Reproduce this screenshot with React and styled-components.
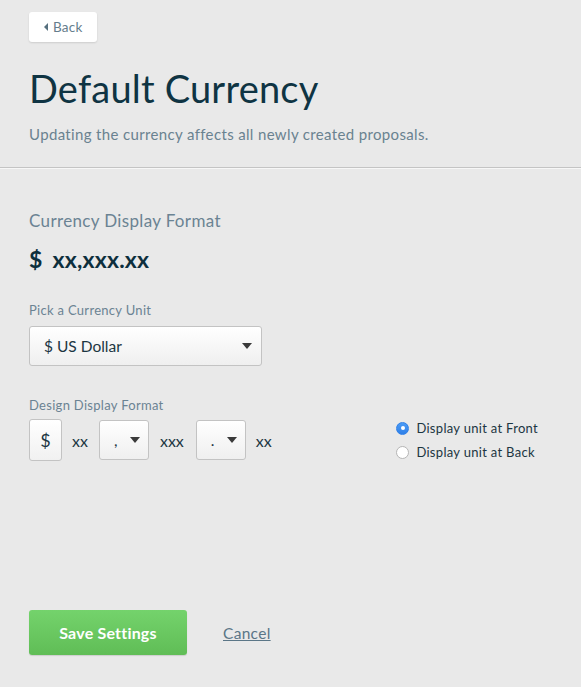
import React from "react";
import styled, { createGlobalStyle } from "styled-components";

const Global = createGlobalStyle`
  html, body { margin: 0; padding: 0; background: #e9e9e9; }
  body { font-family: "Lato", "Open Sans", sans-serif; -webkit-font-smoothing: antialiased; }
  * { box-sizing: border-box; }
`;

const Page = styled.div`
  width: 581px;
  min-height: 687px;
  background: #e9e9e9;
  display: flex;
  flex-direction: column;
`;

const Header = styled.header`
  padding: 12px 29px 0;
  border-bottom: 1px solid #c4c4c4;
  box-shadow: 0 1px 0 #f7f7f7;
  height: 168px;
`;

const BackButton = styled.button`
  display: inline-flex;
  align-items: center;
  gap: 5px;
  height: 30px;
  width: 68px;
  padding: 0 0 0 15px;
  border: none;
  border-radius: 3px;
  background: #fff;
  box-shadow: 0 1px 2px rgba(0,0,0,0.12);
  color: #657d8c;
  font-family: inherit;
  font-size: 13.5px;
  letter-spacing: 0.2px;
  cursor: pointer;
`;

const Caret = styled.span`
  width: 0;
  height: 0;
  border-top: 4px solid transparent;
  border-bottom: 4px solid transparent;
  border-right: 4px solid #56707f;
`;

const Title = styled.h1`
  margin: 24px 0 0;
  font-size: 38px;
  line-height: 44px;
  font-weight: 400;
  color: #0f3443;
  letter-spacing: 0.2px;
`;

const Subtitle = styled.p`
  margin: 14px 0 0;
  font-size: 15px;
  line-height: 20px;
  letter-spacing: 0.35px;
  color: #6a8290;
`;

const Body = styled.main`
  padding: 42px 29px 0;
  display: flex;
  flex-direction: column;
  flex: 1;
`;

const SectionTitle = styled.h2`
  margin: 0;
  font-size: 17px;
  line-height: 22px;
  font-weight: 400;
  letter-spacing: 0.35px;
  color: #6b8393;
`;

const Preview = styled.div`
  margin-top: 13px;
  display: flex;
  gap: 10px;
  font-size: 23px;
  line-height: 28px;
  font-weight: 700;
  letter-spacing: 0.2px;
  color: #0d2f3d;
`;

const Label = styled.label`
  display: block;
  margin-top: ${(p) => p.$top}px;
  font-size: 13px;
  line-height: 16px;
  letter-spacing: 0.3px;
  color: #6b8393;
`;

const SelectBox = styled.div`
  display: flex;
  align-items: center;
  justify-content: space-between;
  width: ${(p) => p.$w}px;
  height: ${(p) => p.$h}px;
  padding: 0 ${(p) => p.$pr}px 0 ${(p) => p.$pl}px;
  margin-top: ${(p) => p.$top || 0}px;
  border: 1px solid #c3c3c3;
  border-radius: 3px;
  background: linear-gradient(#ffffff, #efefef);
  color: #1c3642;
  font-size: 15.5px;
`;

const Arrow = styled.span`
  width: 0;
  height: 0;
  border-left: 5px solid transparent;
  border-right: 5px solid transparent;
  border-top: 6px solid #3a3a3a;
`;

const FormatRow = styled.div`
  display: flex;
  align-items: center;
  margin-top: 6px;
`;

const UnitBox = styled.div`
  width: 33px;
  height: 42px;
  display: flex;
  align-items: center;
  justify-content: center;
  border: 1px solid #c3c3c3;
  border-radius: 3px;
  background: linear-gradient(#ffffff, #f1f1f1);
  color: #1c3642;
  font-size: 18px;
`;

const Part = styled.span`
  font-size: 16px;
  color: #1c3642;
  margin: 0 ${(p) => p.$mr}px 0 ${(p) => p.$ml}px;
`;

const Radios = styled.div`
  margin-left: auto;
  margin-right: 14px;
  display: flex;
  flex-direction: column;
  gap: 8px;
`;

const RadioRow = styled.label`
  display: flex;
  align-items: center;
  gap: 7px;
  font-size: 13px;
  line-height: 16px;
  letter-spacing: 0.3px;
  color: #1c3642;
`;

const RadioDot = styled.span`
  width: 13px;
  height: 13px;
  border-radius: 50%;
  display: flex;
  align-items: center;
  justify-content: center;
  background: ${(p) => (p.$on ? "linear-gradient(#4b9bf5, #2f80e8)" : "#fff")};
  border: 1px solid ${(p) => (p.$on ? "#2f80e8" : "#b5b5b5")};
  &::after {
    content: "";
    display: ${(p) => (p.$on ? "block" : "none")};
    width: 4px;
    height: 4px;
    border-radius: 50%;
    background: #fff;
  }
`;

const Actions = styled.div`
  display: flex;
  align-items: center;
  gap: 36px;
  margin-top: 149px;
`;

const SaveButton = styled.button`
  width: 158px;
  height: 45px;
  border: none;
  border-radius: 3px;
  background: linear-gradient(#74d36c, #60bd56);
  box-shadow: 0 1px 1px rgba(0,0,0,0.12);
  color: #fff;
  font-family: inherit;
  font-size: 16px;
  font-weight: 700;
  letter-spacing: 0.2px;
  cursor: pointer;
`;

const CancelLink = styled.a`
  color: #5b7687;
  font-size: 15.5px;
  letter-spacing: 0.3px;
  text-decoration: underline;
  cursor: pointer;
`;

export default function App() {
  return (
    <Page>
      <Global />
      <Header>
        <BackButton>
          <Caret />
          Back
        </BackButton>
        <Title>Default Currency</Title>
        <Subtitle>Updating the currency affects all newly created proposals.</Subtitle>
      </Header>
      <Body>
        <SectionTitle>Currency Display Format</SectionTitle>
        <Preview>
          <span>$</span>
          <span>xx,xxx.xx</span>
        </Preview>
        <Label $top={29}>Pick a Currency Unit</Label>
        <SelectBox $w={233} $h={40} $pl={14} $pr={9} $top={8}>
          <span>$ US Dollar</span>
          <Arrow />
        </SelectBox>
        <Label $top={31}>Design Display Format</Label>
        <FormatRow>
          <UnitBox>$</UnitBox>
          <Part $ml={10} $mr={11}>xx</Part>
          <SelectBox $w={50} $h={40} $pl={14} $pr={8}>
            <span>,</span>
            <Arrow />
          </SelectBox>
          <Part $ml={11} $mr={12}>xxx</Part>
          <SelectBox $w={50} $h={40} $pl={14} $pr={8}>
            <span>.</span>
            <Arrow />
          </SelectBox>
          <Part $ml={10} $mr={0}>xx</Part>
          <Radios>
            <RadioRow>
              <RadioDot $on />
              Display unit at Front
            </RadioRow>
            <RadioRow>
              <RadioDot />
              Display unit at Back
            </RadioRow>
          </Radios>
        </FormatRow>
        <Actions>
          <SaveButton>Save Settings</SaveButton>
          <CancelLink>Cancel</CancelLink>
        </Actions>
      </Body>
    </Page>
  );
}
